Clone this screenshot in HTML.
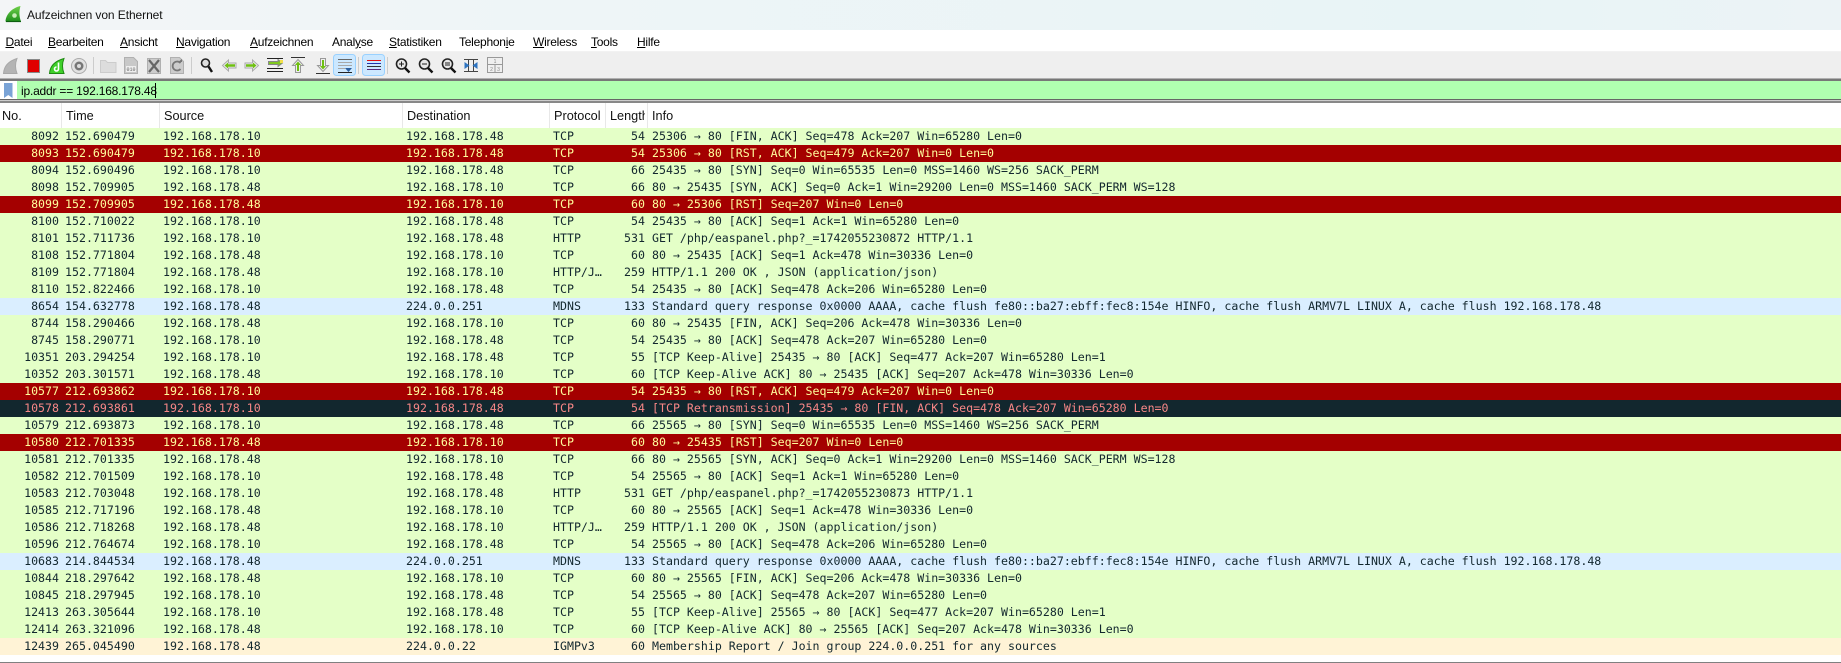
<!DOCTYPE html>
<html lang="de"><head><meta charset="utf-8"><title>Aufzeichnen von Ethernet</title>
<style>
html,body{margin:0;padding:0;width:1841px;height:663px;overflow:hidden;background:#fff}
body{position:relative;font-family:"Liberation Sans",sans-serif;font-size:12px;color:#000}
.a{position:absolute}
#title{left:0;top:0;width:1841px;height:30px;background:linear-gradient(90deg,#f3f5f7 0,#eef5f7 30%,#e8f4f6 80%,#ecf3f6 100%)}
#title span{position:absolute;left:27px;top:8px;font-size:12px;letter-spacing:-.08px;color:#111}
#menu span{position:absolute;top:35px;font-size:12px;letter-spacing:-.25px;color:#000;white-space:pre}
#menu u{text-underline-offset:1px}
#tb{left:0;top:51px;width:1841px;height:28px;background:#efefef;border-top:1px solid #f2f2f2;box-sizing:border-box;border-bottom:1px solid #b0b0b0}
#fl{left:0;top:79px;width:1841px;height:21px;background:#b0ffb0;border-top:2px solid #777;border-bottom:1px solid #666;box-sizing:border-box}
#bm{left:0;top:81px;width:17px;height:18px;background:#fff}
#ft{left:21px;top:84px;font-size:12px;letter-spacing:-.2px;color:#000}
#caret{left:155px;top:83px;width:1px;height:15px;background:#000}
#l2{left:0;top:100px;width:1841px;height:3px;background:linear-gradient(#ccc 0,#ccc 33%,#888 33%,#888 100%)}
.h{position:absolute;top:103px;height:25px;line-height:27px;font-size:12.7px;color:#111;white-space:nowrap;overflow:hidden}
.s{position:absolute;top:103px;width:1px;height:25px;background:#e8e8e8}
#list{left:0;top:128px;width:1841px;height:527px;font-family:"DejaVu Sans Mono","Liberation Mono",monospace;font-size:11.6px}
.r{position:relative;height:17px;line-height:17px;white-space:pre;background:#e4ffc7;color:#12272e;overflow:hidden}
.r span{position:absolute;top:0}
.r span:nth-child(1){right:1782px}
.r span:nth-child(2){left:65px}
.r span:nth-child(3){left:163px}
.r span:nth-child(4){left:406px}
.r span:nth-child(5){left:553px}
.r span:nth-child(6){right:1196px}
.r span:nth-child(7){left:652px}
.x{background:#a40000;color:#fffc9c}
.b{background:#12272e;color:#f78787}
.m{background:#daeeff}
.i{background:#fff3d6}
#bot{left:0;top:662px;width:1841px;height:1px;background:#808080}
</style></head><body>
<div class="a" id="title"><svg class="a" style="left:5px;top:5px" width="18" height="18" viewBox="0 0 18 18"><defs><linearGradient id="g" x1="0" y1="0" x2="0" y2="1"><stop offset="0" stop-color="#6fd04a"/><stop offset="1" stop-color="#1f8f1c"/></linearGradient></defs><path d="M0.500 16.500C1 9 7 3 15.500 1c-1.500 5-1.500 10 .5 15.500z" fill="url(#g)"/><path d="M1 16.500h15" stroke="#0d5e10" stroke-width="1.200"/><circle cx="9.500" cy="10.500" r="2.300" fill="#c9eeb8"/></svg><span>Aufzeichnen von Ethernet</span></div>
<div id="menu"><span style="left:5.500px"><u>D</u>atei</span><span style="left:48px"><u>B</u>earbeiten</span><span style="left:120px"><u>A</u>nsicht</span><span style="left:176px"><u>N</u>avigation</span><span style="left:250px"><u>A</u>ufzeichnen</span><span style="left:332px">Anal<u>y</u>se</span><span style="left:389px"><u>S</u>tatistiken</span><span style="left:459px">Telephon<u>i</u>e</span><span style="left:533px"><u>W</u>ireless</span><span style="left:591px"><u>T</u>ools</span><span style="left:637px"><u>H</u>ilfe</span></div>
<div class="a" id="tb"></div>
<svg class="a" style="left:0;top:50px" width="520" height="30" viewBox="0 50 520 30" fill="none">
<path d="M3.500 73.500C4 66 9 61 17 58.500c-2 5-2 10 0 15z" fill="#b4b4b4" stroke="#a8a8a8"/>
<rect x="27.500" y="59.500" width="12" height="13" fill="#e00000" stroke="#888"/>
<path d="M49.500 73.500C50 66 55 61 64 58.500c-2 5-2 10 0 15z" fill="#3fd02a" stroke="#1e8a12"/><path d="M58.500 62.500v6.500a2 2 0 1 1-2-2" stroke="#fff" stroke-width="1.600"/>
<circle cx="79" cy="66" r="7.500" fill="#e2e2e2" stroke="#aaa"/><circle cx="79" cy="66" r="4.500" fill="#777"/><circle cx="79" cy="66" r="2" fill="#ddd"/>
<path d="M93.500 57v17M191.500 57v17M358.500 57v17M387.500 57v17" stroke="#ccc"/>
<path d="M100.500 60.500h5l2 2h8.500v10h-15.500z" fill="#ddd" stroke="#ccc"/>
<path d="M124.500 57.500h9l4 4v12h-13z" fill="#c8c8c8" stroke="#b0b0b0"/><rect x="126" y="66" width="10" height="6" fill="#eee"/><text x="131" y="71" font-size="5" font-family="Liberation Mono,monospace" fill="#666" text-anchor="middle">010</text>
<rect x="147.500" y="58.500" width="13" height="15" fill="#ccc" stroke="#b0b0b0"/><path d="M149 60l10 12M159 60l-10 12" stroke="#666" stroke-width="2.200"/>
<path d="M170.500 57.500h9l4 4v12h-13z" fill="#ccc" stroke="#b0b0b0"/><path d="M180.500 63a4.500 4.500 0 1 0 0 6" stroke="#777" stroke-width="1.800"/><path d="M178 62h4v-3z" fill="#777"/>
<circle cx="205.500" cy="63" r="4" fill="#ddd" stroke="#222" stroke-width="1.600"/><path d="M208.500 66.500l3.500 5.500" stroke="#111" stroke-width="2.400"/>
<path d="M222.500 65.500l6-5.500v3h7.500v5h-7.500v3z" fill="#eee" stroke="#aaa"/><path d="M224.500 65.500l3.500-3v1.700h7v2.600h-7v1.700z" fill="#6fbf12"/>
<path d="M258.500 65.500l-6-5.500v3h-7.500v5h7.500v3z" fill="#eee" stroke="#aaa"/><path d="M256.500 65.500l-3.500-3v1.700h-7v2.600h7v1.700z" fill="#6fbf12"/>
<path d="M268.500 61.500h9.500v-2l4.500 3.500-4.500 3.500v-2h-9.500z" fill="#7fc81e" stroke="#888"/><path d="M267 58.500h16M267 68.500h16M267 71.500h16" stroke="#222"/><rect x="280" y="60" width="3" height="3" fill="#f4e04a"/>
<path d="M291 57.500h14" stroke="#333"/><path d="M298 59.500l5.500 6h-3v7h-5v-7h-3z" fill="#eee" stroke="#999"/><path d="M298 61.500l3 3.500h-2v6h-2v-6h-2z" fill="#6fbf12"/>
<path d="M316 73.500h14" stroke="#333"/><path d="M323 71.500l5.500-6h-3v-7h-5v7h-3z" fill="#eee" stroke="#999"/><path d="M323 69.500l3-3.500h-2v-6h-2v6h-2z" fill="#6fbf12"/>
<rect x="333.500" y="54.500" width="22" height="21" rx="3" fill="#cce8ff" stroke="#99d1ff"/>
<path d="M338 59.500h14" stroke="#666"/><path d="M338 62.500h14M338 65.500h14M338 68.500h7" stroke="#a8a8a8"/><path d="M338 72.500h14" stroke="#222"/><path d="M345 68h7l-3.500 4z" fill="#2a5fa0"/>
<rect x="362.500" y="54.500" width="22" height="21" rx="3" fill="#cce8ff" stroke="#99d1ff"/>
<path d="M367 60.500h14" stroke="#e01010"/><path d="M367 63.500h14" stroke="#2233aa"/><path d="M367 66.500h14" stroke="#333"/><path d="M367 69.500h14" stroke="#5a2a7a"/>
<circle cx="401.500" cy="64" r="5" fill="#e8e8e8" stroke="#222" stroke-width="1.600"/><path d="M405 68l4.500 4.500" stroke="#111" stroke-width="2.400"/><path d="M399 64h5M401.500 61.500v5" stroke="#222"/>
<circle cx="424.500" cy="64" r="5" fill="#e8e8e8" stroke="#222" stroke-width="1.600"/><path d="M428 68l4.500 4.500" stroke="#111" stroke-width="2.400"/><path d="M422 64h5" stroke="#222"/>
<circle cx="447.500" cy="64" r="5" fill="#e8e8e8" stroke="#222" stroke-width="1.600"/><path d="M451 68l4.500 4.500" stroke="#111" stroke-width="2.400"/><path d="M445 63h5M445 65h5" stroke="#222"/>
<path d="M464 59.500h14M464 71.500h14M468.500 59v13M473.500 59v13" stroke="#444"/><path d="M464.500 62l5 3.500-5 3.500zM477.500 62l-5 3.500 5 3.500z" fill="#2f74c0"/>
<rect x="487.500" y="57.500" width="15" height="15" fill="#efefef" stroke="#999"/><path d="M488 64.500h14M495 65v7" stroke="#999"/><text x="495" y="63" font-size="5" font-family="Liberation Sans,sans-serif" fill="#888" text-anchor="middle">1</text><text x="491.500" y="71" font-size="5" font-family="Liberation Sans,sans-serif" fill="#888" text-anchor="middle">2</text><text x="498.500" y="71" font-size="5" font-family="Liberation Sans,sans-serif" fill="#888" text-anchor="middle">3</text>
</svg>
<div class="a" id="fl"></div>
<div class="a" id="bm"><svg width="17" height="18" viewBox="0 0 17 18"><path d="M4 2h8.500v15l-4.250-3L4 17z" fill="#7aa3d6"/></svg></div>
<div class="a" id="ft">ip.addr == 192.168.178.48</div><div class="a" id="caret"></div>
<div class="a" id="l2"></div>
<div class="h" style="left:2px">No.</div><div class="h" style="left:66px">Time</div><div class="h" style="left:164px">Source</div><div class="h" style="left:407px">Destination</div><div class="h" style="left:554px;width:50px">Protocol</div><div class="h" style="left:610px;width:35px">Length</div><div class="h" style="left:652px">Info</div>
<div class="s" style="left:61px"></div><div class="s" style="left:159px"></div><div class="s" style="left:402px"></div><div class="s" style="left:549px"></div><div class="s" style="left:605px"></div><div class="s" style="left:647px"></div>
<div class="a" id="list">
<div class="r"><span>8092</span><span>152.690479</span><span>192.168.178.10</span><span>192.168.178.48</span><span>TCP</span><span>54</span><span>25306 → 80 [FIN, ACK] Seq=478 Ack=207 Win=65280 Len=0</span></div>
<div class="r x"><span>8093</span><span>152.690479</span><span>192.168.178.10</span><span>192.168.178.48</span><span>TCP</span><span>54</span><span>25306 → 80 [RST, ACK] Seq=479 Ack=207 Win=0 Len=0</span></div>
<div class="r"><span>8094</span><span>152.690496</span><span>192.168.178.10</span><span>192.168.178.48</span><span>TCP</span><span>66</span><span>25435 → 80 [SYN] Seq=0 Win=65535 Len=0 MSS=1460 WS=256 SACK_PERM</span></div>
<div class="r"><span>8098</span><span>152.709905</span><span>192.168.178.48</span><span>192.168.178.10</span><span>TCP</span><span>66</span><span>80 → 25435 [SYN, ACK] Seq=0 Ack=1 Win=29200 Len=0 MSS=1460 SACK_PERM WS=128</span></div>
<div class="r x"><span>8099</span><span>152.709905</span><span>192.168.178.48</span><span>192.168.178.10</span><span>TCP</span><span>60</span><span>80 → 25306 [RST] Seq=207 Win=0 Len=0</span></div>
<div class="r"><span>8100</span><span>152.710022</span><span>192.168.178.10</span><span>192.168.178.48</span><span>TCP</span><span>54</span><span>25435 → 80 [ACK] Seq=1 Ack=1 Win=65280 Len=0</span></div>
<div class="r"><span>8101</span><span>152.711736</span><span>192.168.178.10</span><span>192.168.178.48</span><span>HTTP</span><span>531</span><span>GET /php/easpanel.php?_=1742055230872 HTTP/1.1</span></div>
<div class="r"><span>8108</span><span>152.771804</span><span>192.168.178.48</span><span>192.168.178.10</span><span>TCP</span><span>60</span><span>80 → 25435 [ACK] Seq=1 Ack=478 Win=30336 Len=0</span></div>
<div class="r"><span>8109</span><span>152.771804</span><span>192.168.178.48</span><span>192.168.178.10</span><span>HTTP/J…</span><span>259</span><span>HTTP/1.1 200 OK , JSON (application/json)</span></div>
<div class="r"><span>8110</span><span>152.822466</span><span>192.168.178.10</span><span>192.168.178.48</span><span>TCP</span><span>54</span><span>25435 → 80 [ACK] Seq=478 Ack=206 Win=65280 Len=0</span></div>
<div class="r m"><span>8654</span><span>154.632778</span><span>192.168.178.48</span><span>224.0.0.251</span><span>MDNS</span><span>133</span><span>Standard query response 0x0000 AAAA, cache flush fe80::ba27:ebff:fec8:154e HINFO, cache flush ARMV7L LINUX A, cache flush 192.168.178.48</span></div>
<div class="r"><span>8744</span><span>158.290466</span><span>192.168.178.48</span><span>192.168.178.10</span><span>TCP</span><span>60</span><span>80 → 25435 [FIN, ACK] Seq=206 Ack=478 Win=30336 Len=0</span></div>
<div class="r"><span>8745</span><span>158.290771</span><span>192.168.178.10</span><span>192.168.178.48</span><span>TCP</span><span>54</span><span>25435 → 80 [ACK] Seq=478 Ack=207 Win=65280 Len=0</span></div>
<div class="r"><span>10351</span><span>203.294254</span><span>192.168.178.10</span><span>192.168.178.48</span><span>TCP</span><span>55</span><span>[TCP Keep-Alive] 25435 → 80 [ACK] Seq=477 Ack=207 Win=65280 Len=1</span></div>
<div class="r"><span>10352</span><span>203.301571</span><span>192.168.178.48</span><span>192.168.178.10</span><span>TCP</span><span>60</span><span>[TCP Keep-Alive ACK] 80 → 25435 [ACK] Seq=207 Ack=478 Win=30336 Len=0</span></div>
<div class="r x"><span>10577</span><span>212.693862</span><span>192.168.178.10</span><span>192.168.178.48</span><span>TCP</span><span>54</span><span>25435 → 80 [RST, ACK] Seq=479 Ack=207 Win=0 Len=0</span></div>
<div class="r b"><span>10578</span><span>212.693861</span><span>192.168.178.10</span><span>192.168.178.48</span><span>TCP</span><span>54</span><span>[TCP Retransmission] 25435 → 80 [FIN, ACK] Seq=478 Ack=207 Win=65280 Len=0</span></div>
<div class="r"><span>10579</span><span>212.693873</span><span>192.168.178.10</span><span>192.168.178.48</span><span>TCP</span><span>66</span><span>25565 → 80 [SYN] Seq=0 Win=65535 Len=0 MSS=1460 WS=256 SACK_PERM</span></div>
<div class="r x"><span>10580</span><span>212.701335</span><span>192.168.178.48</span><span>192.168.178.10</span><span>TCP</span><span>60</span><span>80 → 25435 [RST] Seq=207 Win=0 Len=0</span></div>
<div class="r"><span>10581</span><span>212.701335</span><span>192.168.178.48</span><span>192.168.178.10</span><span>TCP</span><span>66</span><span>80 → 25565 [SYN, ACK] Seq=0 Ack=1 Win=29200 Len=0 MSS=1460 SACK_PERM WS=128</span></div>
<div class="r"><span>10582</span><span>212.701509</span><span>192.168.178.10</span><span>192.168.178.48</span><span>TCP</span><span>54</span><span>25565 → 80 [ACK] Seq=1 Ack=1 Win=65280 Len=0</span></div>
<div class="r"><span>10583</span><span>212.703048</span><span>192.168.178.10</span><span>192.168.178.48</span><span>HTTP</span><span>531</span><span>GET /php/easpanel.php?_=1742055230873 HTTP/1.1</span></div>
<div class="r"><span>10585</span><span>212.717196</span><span>192.168.178.48</span><span>192.168.178.10</span><span>TCP</span><span>60</span><span>80 → 25565 [ACK] Seq=1 Ack=478 Win=30336 Len=0</span></div>
<div class="r"><span>10586</span><span>212.718268</span><span>192.168.178.48</span><span>192.168.178.10</span><span>HTTP/J…</span><span>259</span><span>HTTP/1.1 200 OK , JSON (application/json)</span></div>
<div class="r"><span>10596</span><span>212.764674</span><span>192.168.178.10</span><span>192.168.178.48</span><span>TCP</span><span>54</span><span>25565 → 80 [ACK] Seq=478 Ack=206 Win=65280 Len=0</span></div>
<div class="r m"><span>10683</span><span>214.844534</span><span>192.168.178.48</span><span>224.0.0.251</span><span>MDNS</span><span>133</span><span>Standard query response 0x0000 AAAA, cache flush fe80::ba27:ebff:fec8:154e HINFO, cache flush ARMV7L LINUX A, cache flush 192.168.178.48</span></div>
<div class="r"><span>10844</span><span>218.297642</span><span>192.168.178.48</span><span>192.168.178.10</span><span>TCP</span><span>60</span><span>80 → 25565 [FIN, ACK] Seq=206 Ack=478 Win=30336 Len=0</span></div>
<div class="r"><span>10845</span><span>218.297945</span><span>192.168.178.10</span><span>192.168.178.48</span><span>TCP</span><span>54</span><span>25565 → 80 [ACK] Seq=478 Ack=207 Win=65280 Len=0</span></div>
<div class="r"><span>12413</span><span>263.305644</span><span>192.168.178.10</span><span>192.168.178.48</span><span>TCP</span><span>55</span><span>[TCP Keep-Alive] 25565 → 80 [ACK] Seq=477 Ack=207 Win=65280 Len=1</span></div>
<div class="r"><span>12414</span><span>263.321096</span><span>192.168.178.48</span><span>192.168.178.10</span><span>TCP</span><span>60</span><span>[TCP Keep-Alive ACK] 80 → 25565 [ACK] Seq=207 Ack=478 Win=30336 Len=0</span></div>
<div class="r i"><span>12439</span><span>265.045490</span><span>192.168.178.48</span><span>224.0.0.22</span><span>IGMPv3</span><span>60</span><span>Membership Report / Join group 224.0.0.251 for any sources</span></div>
</div>
<div class="a" id="bot"></div>
</body></html>
